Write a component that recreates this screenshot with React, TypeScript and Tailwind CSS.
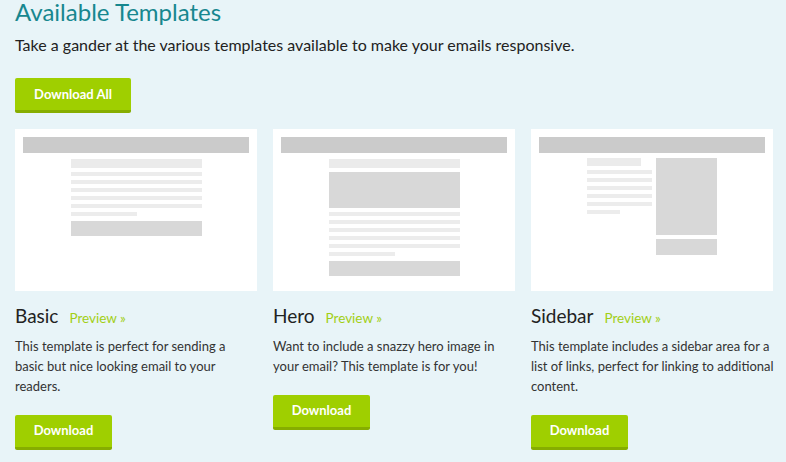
import React from "react";

const font = { fontFamily: "Lato, 'Open Sans', sans-serif" };

function Line({ w = "w-full", mt = "mt-[4px]" }: { w?: string; mt?: string }) {
  return <div className={`${w} h-[4px] ${mt} bg-[#ececec]`} />;
}

function BasicPreview() {
  return (
    <div className="w-[131px] mx-auto mt-[6px] flex flex-col">
      <div className="h-[9px] bg-[#ebebeb]" />
      <Line />
      <Line />
      <Line />
      <Line />
      <Line />
      <Line w="w-[66px]" />
      <div className="h-[15px] mt-[5px] bg-[#d8d8d8]" />
    </div>
  );
}

function HeroPreview() {
  return (
    <div className="w-[131px] mx-auto mt-[6px] flex flex-col">
      <div className="h-[9px] bg-[#ebebeb]" />
      <div className="h-[36px] mt-[4px] bg-[#d8d8d8]" />
      <Line />
      <Line />
      <Line />
      <Line />
      <Line />
      <Line w="w-[66px]" />
      <div className="h-[15px] mt-[5px] bg-[#d8d8d8]" />
    </div>
  );
}

function SidebarPreview() {
  return (
    <div className="w-[131px] mx-auto mt-[5px] flex gap-[4px]">
      <div className="w-[65px] flex flex-col">
        <div className="w-[54px] h-[8px] bg-[#ebebeb]" />
        <Line />
        <Line />
        <Line />
        <Line />
        <Line />
        <Line w="w-[33px]" />
      </div>
      <div className="w-[61px] flex flex-col">
        <div className="h-[77px] bg-[#d8d8d8]" />
        <div className="h-[16px] mt-[4px] bg-[#d8d8d8]" />
      </div>
    </div>
  );
}

function Button({ label, w }: { label: string; w: string }) {
  return (
    <button
      className={`${w} h-[35px] rounded-[2px] bg-[#9fcf00] border-b-[3px] border-[#86ad00] text-white font-bold text-[13px] leading-none`}
      style={font}
    >
      {label}
    </button>
  );
}

function Card({
  title,
  desc,
  preview,
  pw,
}: {
  title: string;
  desc: string;
  preview: React.ReactNode;
  pw: string;
}) {
  return (
    <div className="w-[242px] flex flex-col">
      <div className="h-[162px] bg-white pt-[8px] px-[8px]">
        <div className="h-[16px] bg-[#cbcbcb]" />
        {preview}
      </div>
      <div className="mt-[11px] flex items-baseline gap-[11px]">
        <span className="text-[19px] text-[#222]">{title}</span>
        <span className="text-[13.5px] text-[#a2cf16]">Preview »</span>
      </div>
      <p className={`mt-[5px] ${pw} text-[13px] leading-[20px] text-[#333]`}>{desc}</p>
      <div className="mt-[19px]">
        <Button label="Download" w="w-[97px]" />
      </div>
    </div>
  );
}

export default function App() {
  return (
    <div className="w-[786px] h-[462px] overflow-hidden bg-[#e8f4f8] pl-[15px]" style={font}>
      <h1 className="text-[24px] leading-[24px] text-[#17878f]">Available Templates</h1>
      <p className="mt-[11px] text-[16px] leading-[20px] text-[#222]">
        Take a gander at the various templates available to make your emails responsive.
      </p>
      <div className="mt-[23px]">
        <Button label="Download All" w="w-[116px]" />
      </div>
      <div className="mt-[16px] flex gap-[16px] items-start">
        <Card
          title="Basic"
          pw="w-[236px]"
          desc="This template is perfect for sending a basic but nice looking email to your readers."
          preview={<BasicPreview />}
        />
        <Card
          title="Hero"
          pw="w-[240px]"
          desc="Want to include a snazzy hero image in your email? This template is for you!"
          preview={<HeroPreview />}
        />
        <Card
          title="Sidebar"
          pw="w-[248px]"
          desc="This template includes a sidebar area for a list of links, perfect for linking to additional content."
          preview={<SidebarPreview />}
        />
      </div>
    </div>
  );
}
